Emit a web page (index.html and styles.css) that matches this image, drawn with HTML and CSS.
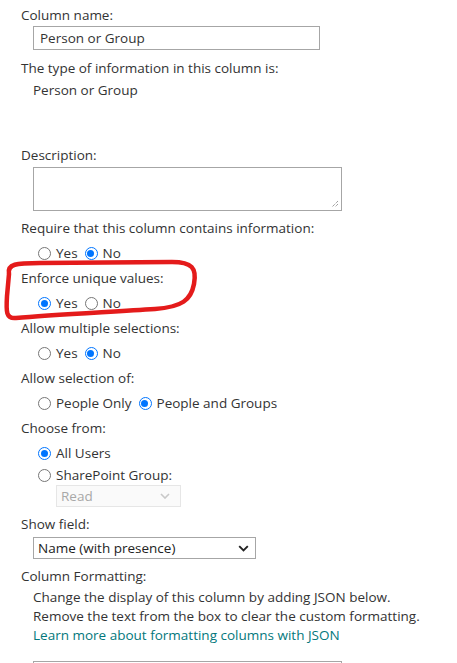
FILE: index.html
```html
<!DOCTYPE html>
<html>
<head>
<meta charset="utf-8">
<link rel="stylesheet" href="styles.css">
</head>
<body>
<div class="page">
  <div class="lbl first">Column name:</div>
  <div class="indent"><div class="textbox">Person or Group</div></div>
  <div class="lbl gap9">The type of information in this column is:</div>
  <div class="indent value">Person or Group</div>

  <div class="lbl desc">Description:</div>
  <div class="indent"><div class="textarea"><svg class="grip" width="9" height="9" viewBox="0 0 9 9"><path d="M8 2L2 8M8 5L5 8" stroke="#777" stroke-width="1" stroke-dasharray="1 1"/></svg></div></div>

  <div class="lbl gap8">Require that this column contains information:</div>
  <div class="row"><span class="radio"></span><span class="opt">Yes</span><span class="radio on"></span><span class="opt">No</span></div>

  <div class="lbl gap6">Enforce unique values:</div>
  <div class="row"><span class="radio on"></span><span class="opt">Yes</span><span class="radio"></span><span class="opt">No</span></div>

  <div class="lbl gap6">Allow multiple selections:</div>
  <div class="row"><span class="radio"></span><span class="opt">Yes</span><span class="radio on"></span><span class="opt">No</span></div>

  <div class="lbl gap6">Allow selection of:</div>
  <div class="row"><span class="radio"></span><span class="opt">People Only</span><span class="radio on"></span><span class="opt">People and Groups</span></div>

  <div class="lbl gap6">Choose from:</div>
  <div class="row"><span class="radio on"></span><span class="opt">All Users</span></div>
  <div class="row tight"><span class="radio"></span><span class="opt">SharePoint Group:</span></div>
  <div class="subindent">
    <div class="select disabled"><span>Read</span><svg width="10" height="6" viewBox="0 0 10 6"><path d="M1 1l4 4 4-4" fill="none" stroke="#c8c8c8" stroke-width="1.6"/></svg></div>
  </div>

  <div class="lbl showfield">Show field:</div>
  <div class="indent"><div class="select main"><span>Name (with presence)</span><svg width="11" height="7" viewBox="0 0 11 7"><path d="M1.2 1.2l4.3 4.3 4.3-4.3" fill="none" stroke="#222" stroke-width="1.9"/></svg></div></div>

  <div class="lbl gap8">Column Formatting:</div>
  <div class="indent para">
    <div>Change the display of this column by adding JSON below.</div>
    <div>Remove the text from the box to clear the custom formatting.</div>
    <div class="link">Learn more about formatting columns with JSON</div>
  </div>
  <div class="indent"><div class="textarea json"></div></div>
</div>
<svg class="annot" width="457" height="663" viewBox="0 0 457 663">
  <path d="M9 274 C7 264 16 263 40 263 L172 262 C192 262 197 268 194 284 C191 300 182 307 155 309 C110 312 50 315 16 318 C6 319 6 312 7 296 Z" fill="none" stroke="#e41b1b" stroke-width="4.5" stroke-linejoin="round"/>
</svg>
</body>
</html>
```
FILE: styles.css
```css
html, body {
  margin: 0;
  padding: 0;
  background: #fff;
}
body {
  font-family: "Open Sans", "Noto Sans", sans-serif;
  font-size: 13.5px;
  color: #333;
  width: 457px;
  height: 663px;
  overflow: hidden;
  position: relative;
}
.page {
  padding-left: 21px;
}
.lbl {
  line-height: 19px;
  height: 19px;
  white-space: nowrap;
}
.first { margin-top: 6px; }
.gap5 { margin-top: 5px; }
.gap6 { margin-top: 6px; }
.gap8 { margin-top: 8px; }
.gap9 { margin-top: 9px; }
.desc { margin-top: 46px; }
.showfield { margin-top: 8px; }
.indent {
  padding-left: 12px;
}
.value {
  line-height: 19px;
  margin-top: 3px;
}
.textbox {
  margin-top: 1px;
  width: 287px;
  height: 24px;
  box-sizing: border-box;
  border: 1px solid #a6a6a6;
  padding-left: 6px;
  line-height: 22px;
}
.textarea {
  margin-top: 2px;
  width: 309px;
  height: 44px;
  box-sizing: border-box;
  border: 1px solid #a6a6a6;
  position: relative;
}
.textarea.json {
  margin-top: 16px;
}
.grip {
  position: absolute;
  right: 2px;
  bottom: 2px;
}
.row {
  display: flex;
  align-items: center;
  height: 19px;
  line-height: 19px;
  margin-top: 6px;
  padding-left: 17px;
  white-space: nowrap;
}
.row.tight { margin-top: 3px; }
.radio {
  width: 13px;
  height: 13px;
  box-sizing: border-box;
  border: 1px solid #767676;
  border-radius: 50%;
  margin-right: 5px;
  flex: none;
  position: relative;
}
.radio.on {
  border: 1.5px solid #0075ff;
}
.radio.on::after {
  content: "";
  position: absolute;
  left: 1.5px;
  top: 1.5px;
  width: 7px;
  height: 7px;
  border-radius: 50%;
  background: #0075ff;
}
.opt {
  margin-right: 7px;
}
.subindent {
  padding-left: 35px;
}
.select {
  box-sizing: border-box;
  display: flex;
  align-items: center;
  justify-content: space-between;
  border: 1px solid #a6a6a6;
  line-height: 19px;
}
.select.disabled {
  width: 125px;
  height: 22px;
  background: #fafafa;
  border-color: #e6e6e6;
  color: #a8a8a8;
  padding: 0 10px 0 4px;
}
.select.main {
  margin-top: 3px;
  width: 223px;
  height: 22px;
  padding: 0 6px 0 4px;
  color: #222;
}
.para {
  margin-top: 2px;
  line-height: 19px;
  white-space: nowrap;
}
.link {
  color: #03787c;
}
.annot {
  position: absolute;
  left: 0;
  top: 0;
  pointer-events: none;
}
```
